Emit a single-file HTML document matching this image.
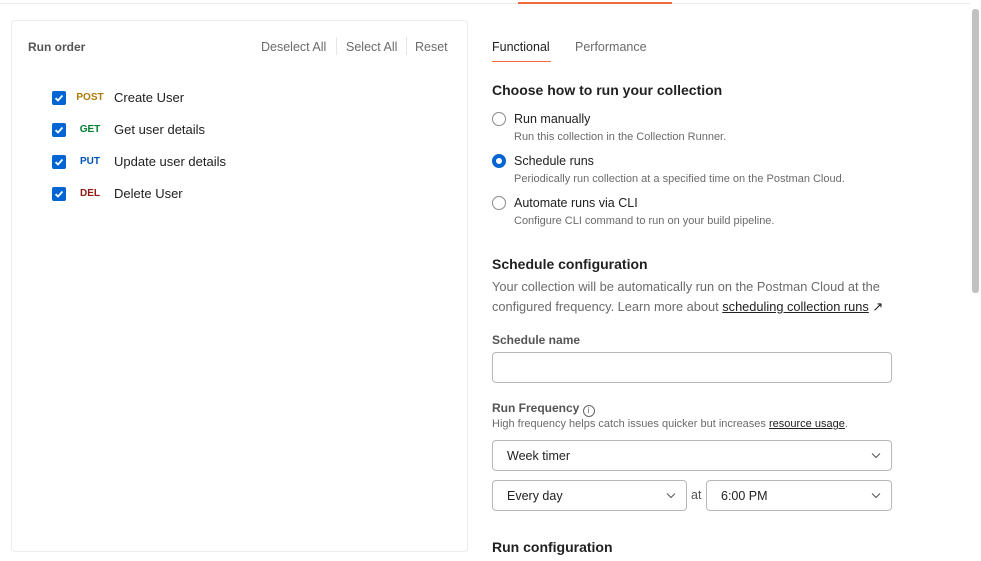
<!DOCTYPE html>
<html><head><meta charset="utf-8"><style>
*{box-sizing:border-box;margin:0;padding:0}
body{width:981px;height:561px;overflow:hidden;background:#fff;font-family:"Liberation Sans",sans-serif;color:#212121;position:relative}
.a{position:absolute;white-space:nowrap}
.cb{position:absolute;left:52px;width:14px;height:14px;background:#0265d2;border-radius:2px}
.cb svg{position:absolute;left:2px;top:2px}
.m{position:absolute;font-size:10px;font-weight:bold;width:40px;text-align:center;left:70px}
.n{position:absolute;left:114px;font-size:13px;color:#212121}
.r{position:absolute;left:492px;width:14px;height:14px;border:1px solid #8a8a8a;border-radius:50%}
.t{position:absolute;left:514px;font-size:12.5px}
.s{position:absolute;left:514px;font-size:11px;color:#6b6b6b}
.box{position:absolute;border:1px solid #b8b8b8;border-radius:4px;height:31px}
.box span{position:absolute;left:14px;top:8px;font-size:12.5px}
.ch{position:absolute;right:10px;top:11px}
h2{position:absolute;left:492px;font-size:14px;font-weight:bold;white-space:nowrap}
</style></head><body>
<div class="a" style="left:0;top:3px;width:970px;height:1px;background:#ececec"></div>
<div class="a" style="left:518px;top:2px;width:154px;height:2px;background:#f26b3a"></div>
<div class="a" style="left:972px;top:9px;width:7px;height:284px;background:#c1c1c1;border-radius:3px"></div>

<div class="a" style="left:11px;top:20px;width:457px;height:532px;border:1px solid #ececec;border-radius:4px"></div>
<div class="a" style="left:28px;top:40px;font-size:12px;font-weight:bold;color:#555">Run order</div>
<div class="a" style="left:261px;top:40px;font-size:12.5px;color:#6b6b6b">Deselect All</div>
<div class="a" style="left:336px;top:37px;width:1px;height:18px;background:#e6e6e6"></div>
<div class="a" style="left:346px;top:40px;font-size:12.5px;color:#6b6b6b">Select All</div>
<div class="a" style="left:406px;top:37px;width:1px;height:18px;background:#e6e6e6"></div>
<div class="a" style="left:415px;top:40px;font-size:12.5px;color:#6b6b6b">Reset</div>

<div class="cb" style="top:91px"><svg width="10" height="10" viewBox="0 0 10 10"><path d="M1.5 5.2L4 7.5 8.5 2.5" stroke="#fff" stroke-width="1.8" fill="none"/></svg></div>
<div class="m" style="top:92px;color:#ad7a03">POST</div><div class="n" style="top:90px">Create User</div>
<div class="cb" style="top:123px"><svg width="10" height="10" viewBox="0 0 10 10"><path d="M1.5 5.2L4 7.5 8.5 2.5" stroke="#fff" stroke-width="1.8" fill="none"/></svg></div>
<div class="m" style="top:124px;color:#007f31">GET</div><div class="n" style="top:122px">Get user details</div>
<div class="cb" style="top:155px"><svg width="10" height="10" viewBox="0 0 10 10"><path d="M1.5 5.2L4 7.5 8.5 2.5" stroke="#fff" stroke-width="1.8" fill="none"/></svg></div>
<div class="m" style="top:156px;color:#0053b8">PUT</div><div class="n" style="top:154px">Update user details</div>
<div class="cb" style="top:187px"><svg width="10" height="10" viewBox="0 0 10 10"><path d="M1.5 5.2L4 7.5 8.5 2.5" stroke="#fff" stroke-width="1.8" fill="none"/></svg></div>
<div class="m" style="top:188px;color:#8e1a10">DEL</div><div class="n" style="top:186px">Delete User</div>

<div class="a" style="left:492px;top:40px;font-size:12.5px;color:#212121">Functional</div>
<div class="a" style="left:492px;top:61px;width:59px;height:1px;background:#f26b3a"></div>
<div class="a" style="left:575px;top:40px;font-size:12.5px;color:#6b6b6b">Performance</div>
<h2 style="top:82px">Choose how to run your collection</h2>

<div class="r" style="top:112px"></div><div class="t" style="top:112px">Run manually</div>
<div class="s" style="top:131px">Run this collection in the Collection Runner.</div>
<div class="r" style="top:154px;border:4px solid #0265d2"></div><div class="t" style="top:154px">Schedule runs</div>
<div class="s" style="top:173px">Periodically run collection at a specified time on the Postman Cloud.</div>
<div class="r" style="top:196px"></div><div class="t" style="top:196px">Automate runs via CLI</div>
<div class="s" style="top:215px">Configure CLI command to run on your build pipeline.</div>

<h2 style="top:256px">Schedule configuration</h2>
<div class="a" style="left:492px;top:277px;font-size:12.8px;color:#6b6b6b;line-height:20px">Your collection will be automatically run on the Postman Cloud at the<br>configured frequency. Learn more about <span style="color:#212121;text-decoration:underline">scheduling collection runs</span> <span style="color:#212121">↗</span></div>
<div class="a" style="left:492px;top:333px;font-size:12px;font-weight:bold;color:#555">Schedule name</div>
<div class="box" style="left:492px;top:352px;width:400px"></div>
<div class="a" style="left:492px;top:401px;font-size:12px;font-weight:bold;color:#555">Run Frequency <span style="display:inline-block;width:12px;height:12px;border:1px solid #666;border-radius:50%;font-size:8px;text-align:center;line-height:10px;vertical-align:-1px;font-weight:normal;color:#555">i</span></div>
<div class="a" style="left:492px;top:418px;font-size:11px;color:#6b6b6b">High frequency helps catch issues quicker but increases <span style="color:#212121;text-decoration:underline">resource usage</span>.</div>
<div class="box" style="left:492px;top:440px;width:400px"><span>Week timer</span><svg class="ch" width="10" height="7" viewBox="0 0 10 7"><path d="M1 1.5L5 5.5 9 1.5" stroke="#555" fill="none"/></svg></div>
<div class="box" style="left:492px;top:480px;width:195px"><span>Every day</span><svg class="ch" width="10" height="7" viewBox="0 0 10 7"><path d="M1 1.5L5 5.5 9 1.5" stroke="#555" fill="none"/></svg></div>
<div class="a" style="left:691px;top:488px;font-size:12.5px;color:#555">at</div>
<div class="box" style="left:706px;top:480px;width:186px"><span>6:00 PM</span><svg class="ch" width="10" height="7" viewBox="0 0 10 7"><path d="M1 1.5L5 5.5 9 1.5" stroke="#555" fill="none"/></svg></div>
<h2 style="top:539px">Run configuration</h2>
</body></html>
